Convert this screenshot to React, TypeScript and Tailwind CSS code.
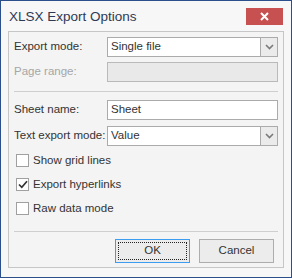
import React, { useState } from "react";

const font = { fontFamily: '"Liberation Sans", Arial, sans-serif' };

const Chevron: React.FC = () => (
  <svg width="9" height="6" viewBox="0 0 9 6">
    <path d="M1 1 L4.5 4.5 L8 1" fill="none" stroke="#7a7a7a" strokeWidth="1.6" />
  </svg>
);

const Combo: React.FC<{ value: string }> = ({ value }) => (
  <div className="flex h-[20px] w-[171px] border border-[#ababab] bg-white">
    <div className="flex flex-1 items-center pl-[3px] text-[#333]">{value}</div>
    <div className="flex w-[17px] items-center justify-center border-l border-[#ababab] bg-[#ebebeb]">
      <Chevron />
    </div>
  </div>
);

const Check: React.FC<{ label: string; checked?: boolean }> = ({ label, checked }) => {
  const [on, setOn] = useState(!!checked);
  return (
    <label className="flex h-[13px] items-center gap-[4px] text-[#333]" onClick={() => setOn(!on)}>
      <span className="flex h-[13px] w-[13px] items-center justify-center border border-[#a0a0a0] bg-white">
        {on && (
          <svg width="10" height="9" viewBox="0 0 10 9">
            <path d="M1 4.5 L3.8 7.3 L9 1.3" fill="none" stroke="#333" strokeWidth="1.7" />
          </svg>
        )}
      </span>
      <span>{label}</span>
    </label>
  );
};

const Row: React.FC<{ label: string; disabled?: boolean; children: React.ReactNode }> = ({
  label,
  disabled,
  children,
}) => (
  <div className="flex items-center justify-between">
    <span className={disabled ? "text-[#a6a6a6]" : "text-[#333]"}>{label}</span>
    {children}
  </div>
);

export default function App() {
  return (
    <div
      className="flex h-[278px] w-[292px] flex-col border border-[#2a4f8a] bg-[#f7f7f7] text-[11.5px]"
      style={font}
    >
      {/* Title bar */}
      <div className="flex h-[30px] items-start justify-between">
        <div className="pl-[8px] pt-[8px] text-[13.5px] leading-[15px] text-[#2e3a55]">
          XLSX Export Options
        </div>
        <div className="mr-[8px] mt-[7px] flex h-[17px] w-[37px] items-center justify-center bg-[#c75050]">
          <svg width="9" height="9" viewBox="0 0 9 9">
            <path d="M1 1 L8 8 M8 1 L1 8" stroke="#fff" strokeWidth="2" />
          </svg>
        </div>
      </div>

      {/* Panel */}
      <div className="mx-[7px] mb-[8px] flex h-[237px] flex-col border border-[#c6c6c6] bg-[#f4f4f4] px-[5px] pt-[5px]">
        <Row label="Export mode:">
          <Combo value="Single file" />
        </Row>
        <div className="mt-[5px]">
          <Row label="Page range:" disabled>
            <div className="h-[20px] w-[171px] border border-[#b9b9b9] bg-[#e9e9e9]" />
          </Row>
        </div>
        <div className="mb-[8px] mt-[9px] h-px bg-[#cfcfcf]" />
        <Row label="Sheet name:">
          <div className="flex h-[20px] w-[171px] items-center border border-[#ababab] bg-white pl-[3px] text-[#333]">
            Sheet
          </div>
        </Row>
        <div className="mt-[6px]">
          <Row label="Text export mode:">
            <Combo value="Value" />
          </Row>
        </div>
        <div className="ml-[2px] mt-[8px] flex flex-col gap-[11px]">
          <Check label="Show grid lines" />
          <Check label="Export hyperlinks" checked />
          <Check label="Raw data mode" />
        </div>
        <div className="mt-[16px] h-px bg-[#cfcfcf]" />
        <div className="mt-[7px] flex justify-end gap-[9px] pr-[4px]">
          <button className="flex h-[24px] w-[75px] items-center justify-center border border-[#3c9cf0] bg-[#ececec] p-[2px] text-[#333]">
            <span className="flex h-full w-full items-center justify-center border border-dotted border-[#222]">
              OK
            </span>
          </button>
          <button className="flex h-[24px] w-[75px] items-center justify-center border border-[#adadad] bg-[#ececec] text-[#333]">
            Cancel
          </button>
        </div>
      </div>
    </div>
  );
}
